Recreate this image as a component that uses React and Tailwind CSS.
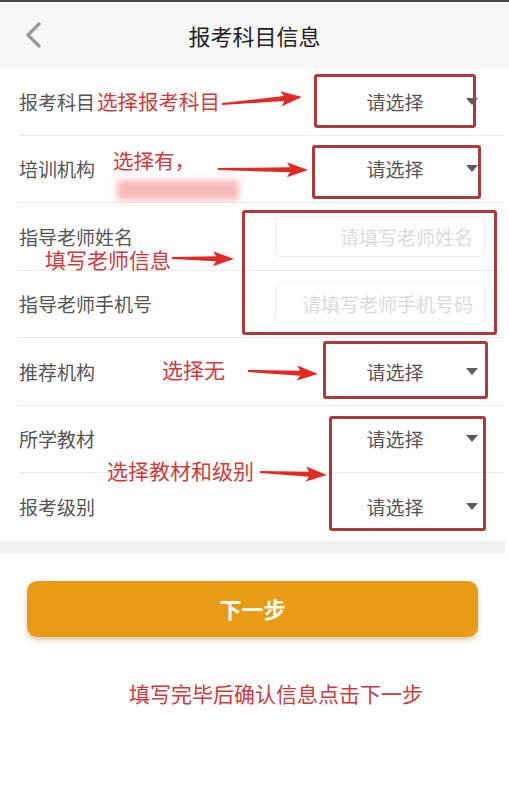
import React from "react";

const font = { fontFamily: '"Noto Sans CJK SC", "Noto Sans", sans-serif' };

function Caret() {
  return (
    <span className="w-0 h-0 border-l-[6px] border-r-[6px] border-t-[7px] border-l-transparent border-r-transparent border-t-[#5c5c5c]" />
  );
}

function SelectRow({ label, last }) {
  return (
    <div className={`h-[67.5px] ml-[18px] mr-[6px] flex items-center justify-between ${last ? "" : "border-b border-[#ececec]"}`}>
      <span className="pl-px text-[19px] leading-none text-[#555555]">{label}</span>
      <div className="w-[154px] mr-[25px] flex items-center">
        <span className="w-[142px] text-center text-[19px] leading-none text-[#555555]">请选择</span>
        <Caret />
      </div>
    </div>
  );
}

function InputRow({ label, placeholder }) {
  return (
    <div className="h-[67.5px] ml-[18px] mr-[6px] flex items-center justify-between border-b border-[#ececec]">
      <span className="pl-px text-[19px] leading-none text-[#555555]">{label}</span>
      <div className="w-[210px] h-[41px] mr-[18px] rounded-md border border-[#eeeeee] flex items-center justify-end pr-[11px]">
        <span className="text-[19px] leading-none text-[#dadada]">{placeholder}</span>
      </div>
    </div>
  );
}

// red callout arrows: [x1, y1, x2, y2]
const arrows = [
  [222, 104, 302, 97],
  [218, 169, 308, 170],
  [172, 258, 234, 259],
  [248, 371, 318, 374],
  [260, 472, 327, 475],
];

function Arrows() {
  return (
    <svg className="absolute left-0 top-0 pointer-events-none" width="509" height="810">
      {arrows.map(([x1, y1, x2, y2], i) => {
        const L = Math.hypot(x2 - x1, y2 - y1);
        const deg = (Math.atan2(y2 - y1, x2 - x1) * 180) / Math.PI;
        const pts = `0,-1 ${L - 18},-2.5 ${L - 21},-7.5 ${L},0 ${L - 21},7.5 ${L - 18},2.5 0,1`;
        return (
          <polygon
            key={i}
            points={pts}
            fill="#e12a24"
            transform={`translate(${x1} ${y1}) rotate(${deg})`}
          />
        );
      })}
    </svg>
  );
}

const boxes = [
  "left-[314px] top-[74px] w-[162px] h-[54px]",
  "left-[312px] top-[145px] w-[169px] h-[54px]",
  "left-[242px] top-[210px] w-[255px] h-[125px]",
  "left-[323px] top-[341px] w-[165px] h-[58px]",
  "left-[329px] top-[416px] w-[157px] h-[115px]",
];

export default function App() {
  return (
    <div className="relative w-[509px] h-[810px] bg-white overflow-hidden" style={font}>
      {/* header */}
      <div className="border-t-2 border-[#4a4a4a]">
        <div className="h-[66px] bg-[#f7f7f7] flex items-center">
          <div className="w-[60px] pl-[24px] flex items-center">
            <svg width="18" height="26" viewBox="0 0 18 26">
              <polyline points="15,2 4,13 15,24" fill="none" stroke="#9a9a9a" strokeWidth="3.2" strokeLinecap="round" strokeLinejoin="round" />
            </svg>
          </div>
          <div className="flex-1 text-center text-[22px] text-[#222222]">报考科目信息</div>
          <div className="w-[60px]" />
        </div>
      </div>

      {/* form */}
      <div>
        <SelectRow label="报考科目" />
        <SelectRow label="培训机构" />
        <InputRow label="指导老师姓名" placeholder="请填写老师姓名" />
        <InputRow label="指导老师手机号" placeholder="请填写老师手机号码" />
        <SelectRow label="推荐机构" />
        <SelectRow label="所学教材" />
        <SelectRow label="报考级别" last />
      </div>

      <div className="h-[12px] bg-[#f1f1f1] mr-[4px]" />

      <div className="mt-[28px] mx-[27px] w-[451px] h-[56px] rounded-[10px] bg-[#e89b14] shadow-[0_3px_5px_rgba(150,100,20,0.35)] flex items-center justify-center">
        <span className="text-[22px] font-bold text-white">下一步</span>
      </div>

      <div className="mt-[42px] ml-[129px] text-[21px] text-[#cc3b3b] leading-[28px]">填写完毕后确认信息点击下一步</div>

      {/* callout overlays */}
      {boxes.map((c, i) => (
        <div key={i} className={`absolute ${c} border-[3px] border-[#ad3a3a] rounded-[3px] pointer-events-none`} />
      ))}
      <span className="absolute left-[97px] top-[91px] text-[20.5px] leading-none text-[#d03a3a]">选择报考科目</span>
      <span className="absolute left-[113px] top-[150px] text-[20.5px] leading-none text-[#d03a3a]">选择有，</span>
      <div className="absolute left-[117px] top-[180px] w-[122px] h-[20px] bg-[#f3a9a9] opacity-80 blur-[3px]" />
      <span className="absolute left-[45px] top-[249px] text-[21px] leading-none text-[#d03a3a]">填写老师信息</span>
      <span className="absolute left-[162px] top-[359px] text-[21px] leading-none text-[#d03a3a]">选择无</span>
      <span className="absolute left-[107px] top-[460px] text-[21px] leading-none text-[#d03a3a]">选择教材和级别</span>
      <Arrows />
    </div>
  );
}
